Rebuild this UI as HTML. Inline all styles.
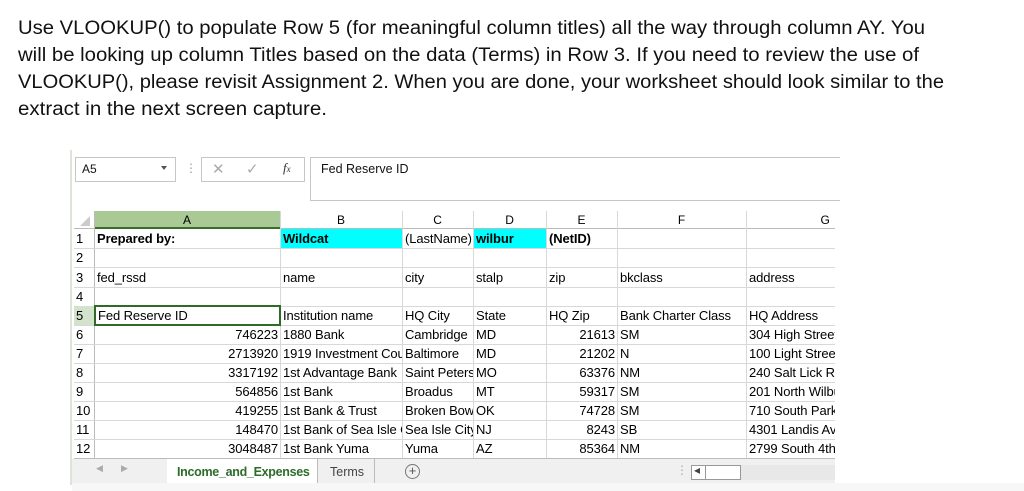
<!DOCTYPE html>
<html><head><meta charset="utf-8"><style>
*{margin:0;padding:0;box-sizing:border-box}
body{width:1024px;height:491px;background:#fff;position:relative;overflow:hidden;font-family:"Liberation Sans",sans-serif;color:#111}
.a{position:absolute;white-space:nowrap;overflow:hidden}
.c{position:absolute;font-size:13px;line-height:20px;white-space:nowrap;overflow:hidden;letter-spacing:-0.1px;padding:0 2px;color:#000}
.r{text-align:right}
.hl{position:absolute;height:1px;background:#d8d8d8}
.vl{position:absolute;width:1px;background:#d8d8d8}
</style></head><body>
<svg class="a" style="left:0;top:0" width="1024" height="130">
<g font-family="Liberation Sans, sans-serif" font-size="19" fill="#111">
<text x="18" y="34" textLength="907" lengthAdjust="spacingAndGlyphs">Use VLOOKUP() to populate Row 5 (for meaningful column titles) all the way through column AY. You</text>
<text x="18" y="61" textLength="901" lengthAdjust="spacingAndGlyphs">will be looking up column Titles based on the data (Terms) in Row 3. If you need to review the use of</text>
<text x="18" y="88" textLength="926" lengthAdjust="spacingAndGlyphs">VLOOKUP(), please revisit Assignment 2. When you are done, your worksheet should look similar to the</text>
<text x="18" y="115" textLength="309" lengthAdjust="spacingAndGlyphs">extract in the next screen capture.</text>
</g></svg>

<div class="a" style="left:70px;top:150px;width:2px;height:335px;background:#dde5d8"></div>
<div class="a" style="left:75px;top:157px;width:101px;height:25px;border:1px solid #c6c6c6;font-size:12px;line-height:23px;padding-left:6px">A5</div>
<div class="a" style="left:161px;top:166px;width:0;height:0;border-left:3px solid transparent;border-right:3px solid transparent;border-top:4px solid #555"></div>
<div class="a" style="left:185px;top:161px;font-size:12px;color:#999">⋮</div>
<div class="a" style="left:201px;top:157px;width:104px;height:25px;border:1px solid #c6c6c6"></div>
<div class="a" style="left:212px;top:160px;font-size:15px;color:#aaa">✕</div>
<div class="a" style="left:246px;top:160px;font-size:15px;color:#aaa">✓</div>
<div class="a" style="left:283px;top:160px;font-size:13px;font-style:italic;font-family:'Liberation Serif',serif;color:#333">f<span style="font-size:9px">x</span></div>
<div class="a" style="left:310px;top:157px;width:530px;height:44px;border:1px solid #c6c6c6;border-right:none;font-size:12.5px;padding:4px 0 0 10px">Fed Reserve ID</div>

<div class="a" style="left:74px;top:211px;width:761px;height:18px;background:#fff;border-bottom:1px solid #bbb"></div>
<div class="a" style="left:94px;top:211px;width:186px;height:18px;background:#a9c995;border-bottom:2px solid #3a6e2f"></div>
<div class="a" style="left:80px;top:216px;width:0;height:0;border-left:10px solid transparent;border-bottom:10px solid #ccc"></div>
<div class="c" style="left:94px;top:210px;width:186px;text-align:center;font-size:12px">A</div>
<div class="c" style="left:280px;top:210px;width:122px;text-align:center;font-size:12px">B</div>
<div class="c" style="left:402px;top:210px;width:71px;text-align:center;font-size:12px">C</div>
<div class="c" style="left:473px;top:210px;width:73px;text-align:center;font-size:12px">D</div>
<div class="c" style="left:546px;top:210px;width:71px;text-align:center;font-size:12px">E</div>
<div class="c" style="left:617px;top:210px;width:129px;text-align:center;font-size:12px">F</div>
<div class="c" style="left:746px;top:210px;width:89px;text-align:right;font-size:12px">G&nbsp;</div>

<div class="vl" style="left:94px;top:211px;height:248px;background:#bbb"></div>
<div class="vl" style="left:280px;top:211px;height:248px"></div>
<div class="vl" style="left:402px;top:211px;height:248px"></div>
<div class="vl" style="left:473px;top:211px;height:248px"></div>
<div class="vl" style="left:546px;top:211px;height:248px"></div>
<div class="vl" style="left:617px;top:211px;height:248px"></div>
<div class="vl" style="left:746px;top:211px;height:248px"></div>
<div class="hl" style="left:74px;top:248px;width:761px"></div>
<div class="hl" style="left:74px;top:267px;width:761px"></div>
<div class="hl" style="left:74px;top:287px;width:761px"></div>
<div class="hl" style="left:74px;top:306px;width:761px"></div>
<div class="hl" style="left:74px;top:325px;width:761px"></div>
<div class="hl" style="left:74px;top:344px;width:761px"></div>
<div class="hl" style="left:74px;top:363px;width:761px"></div>
<div class="hl" style="left:74px;top:382px;width:761px"></div>
<div class="hl" style="left:74px;top:401px;width:761px"></div>
<div class="hl" style="left:74px;top:420px;width:761px"></div>
<div class="hl" style="left:74px;top:439px;width:761px"></div>
<div class="hl" style="left:74px;top:458px;width:761px;background:#bbb"></div>

<div class="c" style="left:74px;top:229px">1</div>
<div class="c" style="left:74px;top:248px">2</div>
<div class="c" style="left:74px;top:268px">3</div>
<div class="c" style="left:74px;top:287px">4</div>
<div class="a" style="left:74px;top:306px;width:20px;height:19px;background:#d3e2cb"></div>
<div class="c" style="left:74px;top:306px">5</div>
<div class="c" style="left:74px;top:325px">6</div>
<div class="c" style="left:74px;top:344px">7</div>
<div class="c" style="left:74px;top:363px">8</div>
<div class="c" style="left:74px;top:382px">9</div>
<div class="c" style="left:74px;top:401px">10</div>
<div class="c" style="left:74px;top:420px">11</div>
<div class="c" style="left:74px;top:439px">12</div>

<div class="c" style="left:95px;top:229px;font-weight:bold">Prepared by:</div>
<div class="c" style="left:281px;top:229px;width:121px;background:#00ffff;font-weight:bold;height:19px">Wildcat</div>
<div class="c" style="left:403px;top:229px;width:70px">(LastName)</div>
<div class="c" style="left:474px;top:229px;width:72px;background:#00ffff;font-weight:bold;height:19px">wilbur</div>
<div class="c" style="left:547px;top:229px;font-weight:bold">(NetID)</div>
<div class="c" style="left:95px;top:268px">fed_rssd</div>
<div class="c" style="left:281px;top:268px">name</div>
<div class="c" style="left:403px;top:268px">city</div>
<div class="c" style="left:474px;top:268px">stalp</div>
<div class="c" style="left:547px;top:268px">zip</div>
<div class="c" style="left:618px;top:268px">bkclass</div>
<div class="c" style="left:747px;top:268px">address</div>
<div class="a" style="left:94px;top:305px;width:187px;height:21px;border:2px solid #2f6a2a"></div>
<div class="c" style="left:96px;top:306px">Fed Reserve ID</div>
<div class="c" style="left:281px;top:306px">Institution name</div>
<div class="c" style="left:403px;top:306px">HQ City</div>
<div class="c" style="left:474px;top:306px">State</div>
<div class="c" style="left:547px;top:306px">HQ Zip</div>
<div class="c" style="left:618px;top:306px">Bank Charter Class</div>
<div class="c" style="left:747px;top:306px;width:88px">HQ Address</div>

<div class="c r" style="left:94px;top:325px;width:186px">746223</div><div class="c" style="left:281px;top:325px;width:121px">1880 Bank</div><div class="c" style="left:403px;top:325px;width:70px">Cambridge</div><div class="c" style="left:474px;top:325px">MD</div><div class="c r" style="left:546px;top:325px;width:71px">21613</div><div class="c" style="left:618px;top:325px">SM</div><div class="c" style="left:747px;top:325px;width:88px">304 High Street</div>
<div class="c r" style="left:94px;top:344px;width:186px">2713920</div><div class="c" style="left:281px;top:344px;width:121px">1919 Investment Counsel</div><div class="c" style="left:403px;top:344px;width:70px">Baltimore</div><div class="c" style="left:474px;top:344px">MD</div><div class="c r" style="left:546px;top:344px;width:71px">21202</div><div class="c" style="left:618px;top:344px">N</div><div class="c" style="left:747px;top:344px;width:88px">100 Light Street</div>
<div class="c r" style="left:94px;top:363px;width:186px">3317192</div><div class="c" style="left:281px;top:363px;width:121px">1st Advantage Bank</div><div class="c" style="left:403px;top:363px;width:70px">Saint Peters</div><div class="c" style="left:474px;top:363px">MO</div><div class="c r" style="left:546px;top:363px;width:71px">63376</div><div class="c" style="left:618px;top:363px">NM</div><div class="c" style="left:747px;top:363px;width:88px">240 Salt Lick Rd</div>
<div class="c r" style="left:94px;top:382px;width:186px">564856</div><div class="c" style="left:281px;top:382px;width:121px">1st Bank</div><div class="c" style="left:403px;top:382px;width:70px">Broadus</div><div class="c" style="left:474px;top:382px">MT</div><div class="c r" style="left:546px;top:382px;width:71px">59317</div><div class="c" style="left:618px;top:382px">SM</div><div class="c" style="left:747px;top:382px;width:88px">201 North Wilbur</div>
<div class="c r" style="left:94px;top:401px;width:186px">419255</div><div class="c" style="left:281px;top:401px;width:121px">1st Bank &amp; Trust</div><div class="c" style="left:403px;top:401px;width:70px">Broken Bow</div><div class="c" style="left:474px;top:401px">OK</div><div class="c r" style="left:546px;top:401px;width:71px">74728</div><div class="c" style="left:618px;top:401px">SM</div><div class="c" style="left:747px;top:401px;width:88px">710 South Park</div>
<div class="c r" style="left:94px;top:420px;width:186px">148470</div><div class="c" style="left:281px;top:420px;width:121px">1st Bank of Sea Isle City</div><div class="c" style="left:403px;top:420px;width:70px">Sea Isle City</div><div class="c" style="left:474px;top:420px">NJ</div><div class="c r" style="left:546px;top:420px;width:71px">8243</div><div class="c" style="left:618px;top:420px">SB</div><div class="c" style="left:747px;top:420px;width:88px">4301 Landis Ave</div>
<div class="c r" style="left:94px;top:439px;width:186px">3048487</div><div class="c" style="left:281px;top:439px;width:121px">1st Bank Yuma</div><div class="c" style="left:403px;top:439px;width:70px">Yuma</div><div class="c" style="left:474px;top:439px">AZ</div><div class="c r" style="left:546px;top:439px;width:71px">85364</div><div class="c" style="left:618px;top:439px">NM</div><div class="c" style="left:747px;top:439px;width:88px">2799 South 4th</div>

<div class="a" style="left:72px;top:459px;width:763px;height:24px;background:#f0f0f0"></div>
<div class="a" style="left:72px;top:483px;width:952px;height:8px;background:#f7f7f7"></div>
<div class="a" style="left:96px;top:463px;font-size:9px;color:#aaa">◀</div>
<div class="a" style="left:121px;top:463px;font-size:9px;color:#aaa">▶</div>
<div class="a" style="left:167px;top:459px;width:151px;height:24px;background:#fff;border-right:1px solid #bbb;font-size:12.5px;font-weight:bold;color:#2d6b2a;line-height:26px;padding-left:10px;letter-spacing:-0.3px">Income_and_Expenses</div>
<div class="a" style="left:318px;top:459px;width:57px;height:24px;border-right:1px solid #bbb;font-size:12.5px;color:#444;line-height:26px;padding-left:12px">Terms</div>
<div class="a" style="left:405px;top:464px;width:15px;height:15px;border:1px solid #777;border-radius:50%;font-size:13px;line-height:12px;text-align:center;color:#555">+</div>
<div class="a" style="left:676px;top:463px;font-size:12px;color:#aaa">⋮</div>
<div class="a" style="left:691px;top:465px;width:144px;height:15px;background:#e8e8e8"></div>
<div class="a" style="left:691px;top:465px;width:50px;height:15px;border:1px solid #999;background:#fff"></div>
<div class="a" style="left:694px;top:466px;font-size:8px;color:#444">◀</div>
<div class="vl" style="left:705px;top:466px;height:13px;background:#999"></div>
</body></html>
